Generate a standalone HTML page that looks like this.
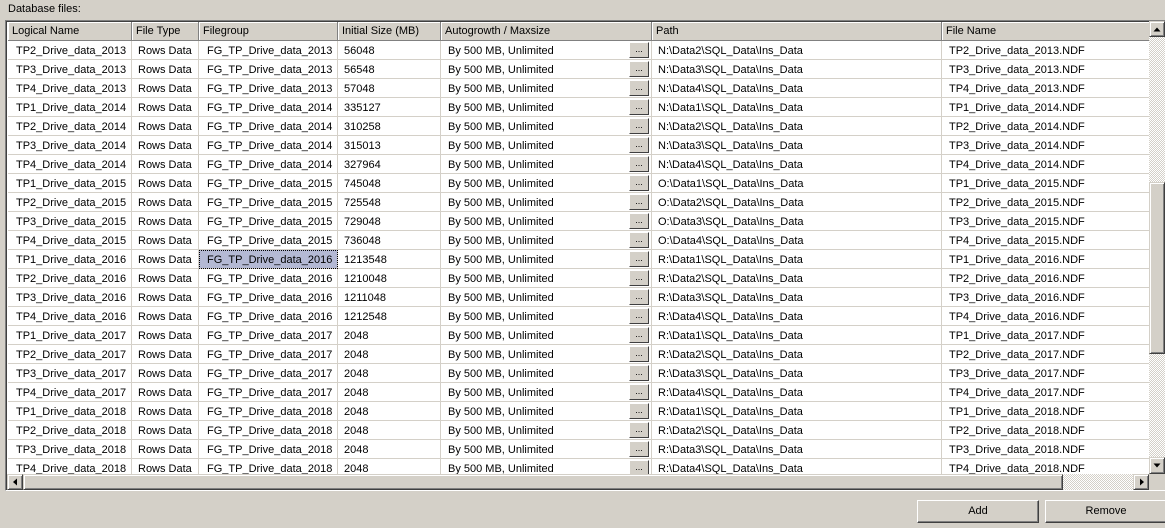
<!DOCTYPE html>
<html><head><meta charset="utf-8"><style>
*{margin:0;padding:0;box-sizing:border-box}
body{width:1165px;height:528px;background:#d4d0c8;font-family:"Liberation Sans",sans-serif;font-size:11px;color:#000;position:relative;overflow:hidden}
.abs{position:absolute}
#frame{left:5px;top:20px;width:1162px;height:471px;border-top:1px solid #808080;border-left:1px solid #808080;border-bottom:1px solid #fff;background:#fff}
#inner{left:6px;top:21px;width:1160px;height:469px;border-top:1px solid #404040;border-left:1px solid #404040;overflow:hidden;background:#fff}
table{border-collapse:separate;border-spacing:0;table-layout:fixed;position:absolute;left:1px;top:0}
td,th{height:19px;white-space:nowrap;overflow:hidden;font-weight:normal;text-align:left;padding:2px 0 0 8px;border-right:1px solid #d4d0c8;border-bottom:1px solid #d4d0c8;line-height:16px}
th{background:#d4d0c8;border-right:1px solid #808080;border-bottom:1px solid #808080;box-shadow:inset 1px 1px 0 #fff;padding:1px 0 0 4px;height:19px;line-height:17px}
td.ag{position:relative}
.btn{position:absolute;right:2px;top:1px;width:20px;height:16px;background:#d4d0c8;border-top:1px solid #fff;border-left:1px solid #fff;border-right:1px solid #404040;border-bottom:1px solid #404040;font-size:9px;text-align:center;line-height:12px;padding:0}
.sel{background:#b4b9d4;outline:1px dotted #000;outline-offset:-1px}
.hatch{background-color:#fff;background-image:repeating-conic-gradient(#d4d0c8 0 25%,#fff 0 50%);background-size:2px 2px}
.raised{background:#d4d0c8;border-top:1px solid #d4d0c8;border-left:1px solid #d4d0c8;border-right:1px solid #404040;border-bottom:1px solid #404040;box-shadow:inset 1px 1px 0 #fff,inset -1px -1px 0 #808080}
.bt{background:#d4d0c8;border-top:1px solid #fff;border-left:1px solid #fff;border-right:1px solid #404040;border-bottom:1px solid #404040;box-shadow:inset -1px -1px 0 #808080;text-align:center;line-height:20px;font-size:11px}
</style></head><body>
<div class="abs" style="left:8px;top:3px">Database files:</div>
<div id="frame" class="abs"></div>
<div id="inner" class="abs">
<table>
<colgroup><col style="width:124px"><col style="width:67px"><col style="width:139px"><col style="width:103px"><col style="width:211px"><col style="width:290px"><col style="width:210px"></colgroup>
<tr><th>Logical Name</th><th>File Type</th><th>Filegroup</th><th>Initial Size (MB)</th><th>Autogrowth / Maxsize</th><th>Path</th><th>File Name</th></tr>
</table>
<table style="top:19px" id="t"></table>
</div>
<div class="abs hatch" style="left:1149px;top:21px;width:16px;height:453px"></div>
<div class="abs raised" style="left:1149px;top:21px;width:16px;height:16px"><svg width="14" height="14" style="position:absolute;left:0;top:0"><path d="M3.5 9.5h7l-3.5-4z" fill="#000"/></svg></div>
<div class="abs raised" style="left:1149px;top:182px;width:16px;height:172px"></div>
<div class="abs raised" style="left:1149px;top:457px;width:16px;height:17px"><svg width="14" height="14" style="position:absolute;left:0;top:0"><path d="M3.5 5.5h7l-3.5 4z" fill="#000"/></svg></div>
<div class="abs hatch" style="left:7px;top:474px;width:1142px;height:16px"></div>
<div class="abs raised" style="left:7px;top:474px;width:16px;height:16px"><svg width="14" height="14" style="position:absolute;left:0;top:0"><path d="M9 3.5v7l-4-3.5z" fill="#000"/></svg></div>
<div class="abs raised" style="left:23px;top:474px;width:1040px;height:16px"></div>
<div class="abs raised" style="left:1133px;top:474px;width:16px;height:16px"><svg width="14" height="14" style="position:absolute;left:0;top:0"><path d="M6 3.5v7l4-3.5z" fill="#000"/></svg></div>
<div class="abs" style="left:1149px;top:474px;width:16px;height:16px;background:#d4d0c8"></div>
<div class="abs bt" style="left:917px;top:500px;width:122px;height:23px">Add</div>
<div class="abs bt" style="left:1045px;top:500px;width:122px;height:23px">Remove</div>
<script>
var rows=[["TP2",2013,"56048","N","2"],["TP3",2013,"56548","N","3"],["TP4",2013,"57048","N","4"],["TP1",2014,"335127","N","1"],["TP2",2014,"310258","N","2"],["TP3",2014,"315013","N","3"],["TP4",2014,"327964","N","4"],["TP1",2015,"745048","O","1"],["TP2",2015,"725548","O","2"],["TP3",2015,"729048","O","3"],["TP4",2015,"736048","O","4"],["TP1",2016,"1213548","R","1"],["TP2",2016,"1210048","R","2"],["TP3",2016,"1211048","R","3"],["TP4",2016,"1212548","R","4"],["TP1",2017,"2048","R","1"],["TP2",2017,"2048","R","2"],["TP3",2017,"2048","R","3"],["TP4",2017,"2048","R","4"],["TP1",2018,"2048","R","1"],["TP2",2018,"2048","R","2"],["TP3",2018,"2048","R","3"],["TP4",2018,"2048","R","4"]];
var h='<colgroup><col style="width:124px"><col style="width:67px"><col style="width:139px"><col style="width:103px"><col style="width:211px"><col style="width:290px"><col style="width:210px"></colgroup>';
rows.forEach(function(r,i){var n=r[0]+"_Drive_data_"+r[1];h+='<tr><td>'+n+'</td><td style="padding-left:6px">Rows Data</td><td'+(i==11?' class="sel"':'')+'>FG_TP_Drive_data_'+r[1]+'</td><td style="padding-left:6px">'+r[2]+'</td><td class="ag" style="padding-left:7px">By 500 MB, Unlimited<div class="btn">...</div></td><td style="padding-left:6px">'+r[3]+':\\Data'+r[4]+'\\SQL_Data\\Ins_Data</td><td style="padding-left:7px">'+n+'.NDF</td></tr>';});
document.getElementById('t').innerHTML=h;
</script>
</body></html>
